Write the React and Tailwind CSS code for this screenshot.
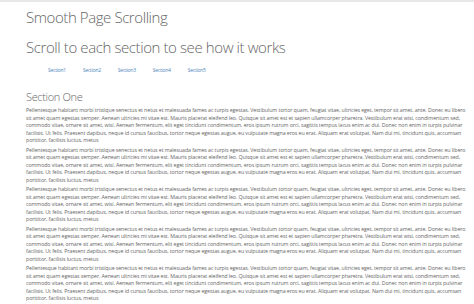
const LOREM =
  "Pellentesque habitant morbi tristique senectus et netus et malesuada fames ac turpis egestas. Vestibulum tortor quam, feugiat vitae, ultricies eget, tempor sit amet, ante. Donec eu libero sit amet quam egestas semper. Aenean ultricies mi vitae est. Mauris placerat eleifend leo. Quisque sit amet est et sapien ullamcorper pharetra. Vestibulum erat wisi, condimentum sed, commodo vitae, ornare sit amet, wisi. Aenean fermentum, elit eget tincidunt condimentum, eros ipsum rutrum orci, sagittis tempus lacus enim ac dui. Donec non enim in turpis pulvinar facilisis. Ut felis. Praesent dapibus, neque id cursus faucibus, tortor neque egestas augue, eu vulputate magna eros eu erat. Aliquam erat volutpat. Nam dui mi, tincidunt quis, accumsan porttitor, facilisis luctus, metus";

const links = ["Section1", "Section2", "Section3", "Section4", "Section5"];

export default function App() {
  return (
    <div className="min-h-screen bg-white font-['Open_Sans',sans-serif] text-[#666]">
      <div className="h-[2px] bg-[#e8e8e8]" />
      <div className="pl-[26px] pr-[6px]">
        <h1 className="mt-[8px] text-[15px] leading-none font-light tracking-[-0.42px] text-[#666]">
          Smooth Page Scrolling
        </h1>
        <h1 className="mt-[15px] text-[15px] leading-none font-light tracking-[-0.4px] text-[#666]">
          Scroll to each section to see how it works
        </h1>
        <nav className="mt-[13px] flex pl-[22px] gap-[17px] text-[5px] leading-none tracking-[-0.25px]">
          {links.map((l) => (
            <a key={l} href={"#" + l} className="text-[#4f86bd]">
              {l}
            </a>
          ))}
        </nav>
        <section>
          <h2 className="mt-[18px] text-[11px] leading-none font-light tracking-[-0.35px] text-[#666]">
            Section One
          </h2>
          <div className="mt-[5px]">
            {[0, 1, 2, 3, 4, 5].map((i) => (
              <p key={i} className="mb-[2px] text-[5.3px] leading-[7.5px] tracking-[-0.1px] text-[#666]">
                {LOREM}
              </p>
            ))}
          </div>
        </section>
      </div>
    </div>
  );
}
